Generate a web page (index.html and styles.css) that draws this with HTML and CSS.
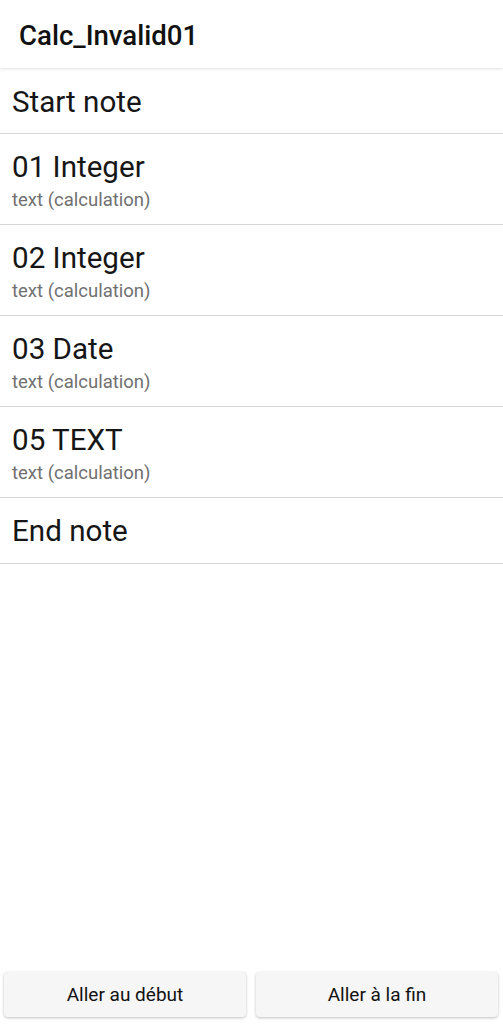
FILE: index.html
```html
<!DOCTYPE html>
<html>
<head>
<meta charset="utf-8">
<link rel="stylesheet" href="styles.css">
</head>
<body>
<div class="app">
  <header class="appbar"><h1 class="title">Calc_Invalid01</h1></header>
  <ul class="list">
    <li class="row note"><span class="label">Start note</span></li>
    <li class="row item"><span class="label">01 Integer</span><span class="sub">text (calculation)</span></li>
    <li class="row item"><span class="label">02 Integer</span><span class="sub">text (calculation)</span></li>
    <li class="row item"><span class="label">03 Date</span><span class="sub">text (calculation)</span></li>
    <li class="row item"><span class="label">05 TEXT</span><span class="sub">text (calculation)</span></li>
    <li class="row note end"><span class="label">End note</span></li>
  </ul>
  <div class="spacer"></div>
  <footer class="actions">
    <button class="btn">Aller au début</button>
    <button class="btn">Aller à la fin</button>
  </footer>
</div>
</body>
</html>
```

FILE: styles.css
```css
* { box-sizing: border-box; }
html, body { margin: 0; padding: 0; background: #fff; }
body { font-family: Roboto, "Noto Sans", sans-serif; color: #1a1a1a; }
.app { display: flex; flex-direction: column; height: 1024px; }
.appbar {
  height: 68px;
  display: flex;
  align-items: center;
  padding: 4px 19px 0;
  background: #fff;
  box-shadow: 0 1px 3px rgba(0,0,0,0.12);
  position: relative;
  z-index: 1;
}
.title { margin: 0; font-size: 27.6px; font-weight: 500; color: #111; line-height: 32px; }
.list { list-style: none; margin: 0; padding: 0; margin-top: 1px; }
.row {
  display: flex;
  flex-direction: column;
  justify-content: flex-start;
  padding: 16px 12px 0;
  border-bottom: 1px solid #d6d6d6;
}
.note { height: 65px; }
.note.end { height: 66px; }
.item { height: 91px; }
.label { font-size: 29.6px; color: #161616; line-height: 34px; }
.sub { font-size: 18.5px; color: #707070; line-height: 22px; margin-top: 5px; }
.spacer { flex: 1; }
.actions {
  display: flex;
  gap: 10px;
  padding: 0 5px 7px 4px;
}
.btn {
  flex: 1;
  height: 45px;
  border: none;
  border-radius: 4px;
  background: #f6f6f6;
  box-shadow: 0 1px 3px rgba(0,0,0,0.25);
  font-family: Roboto, "Noto Sans", sans-serif;
  font-size: 19px;
  color: #111;
  padding: 0;
}
```
